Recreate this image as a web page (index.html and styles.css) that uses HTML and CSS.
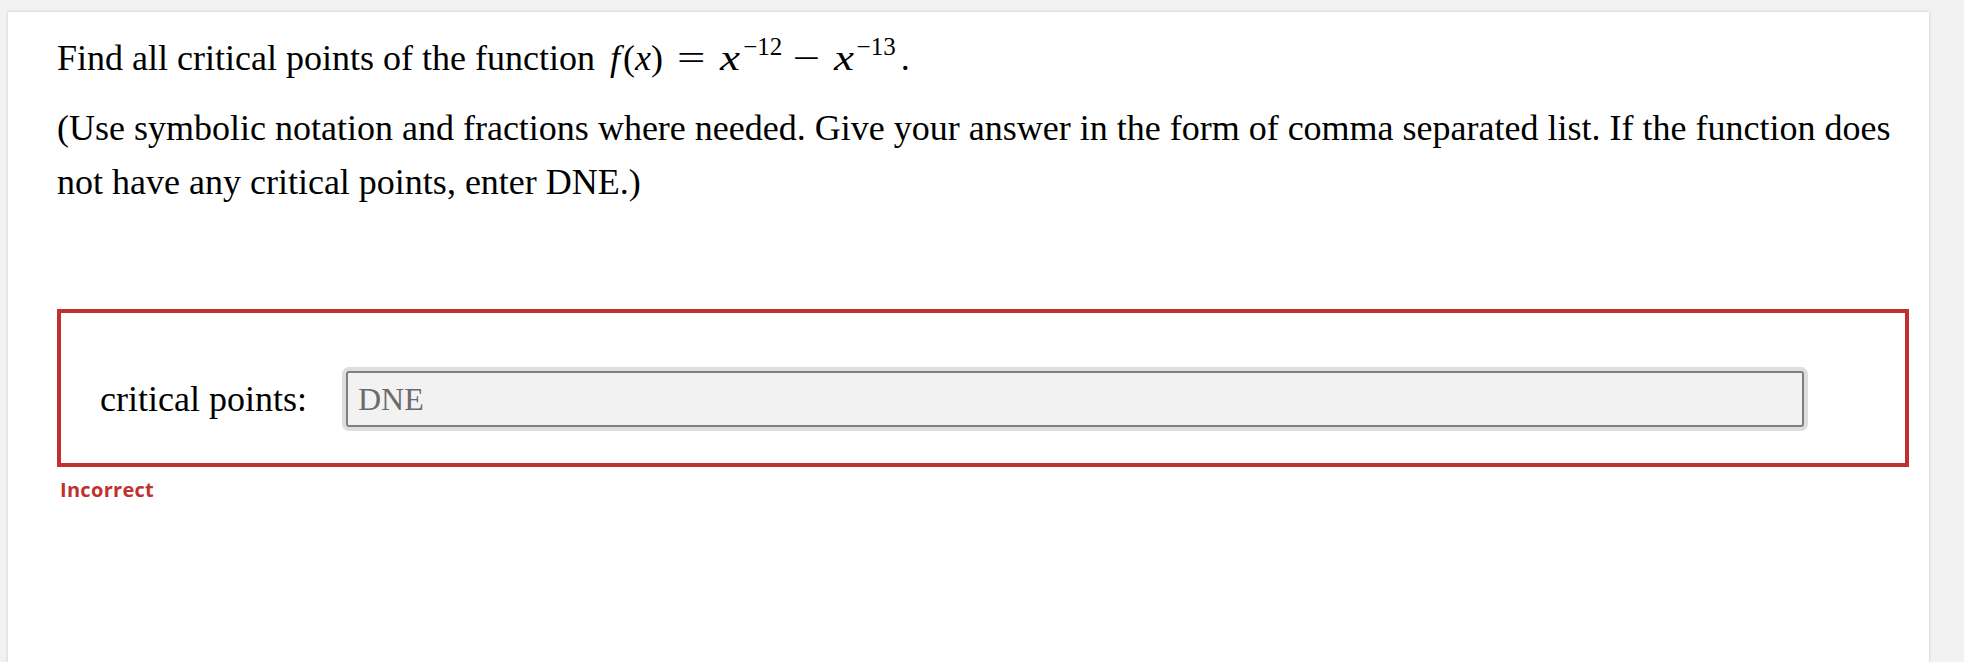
FILE: index.html
```html
<!DOCTYPE html>
<html lang="en">
<head>
<meta charset="utf-8">
<title>Critical points</title>
<link rel="stylesheet" href="styles.css">
</head>
<body>
<div class="card">
  <p class="q1">Find all critical points of the function <span class="math"><span class="mi f">f</span><span class="mo">(</span><span class="mi">x</span><span class="mo">)</span><span class="rel">=</span><span class="mi wide">x</span><span class="sup">−12</span><span class="bin">−</span><span class="mi wide">x</span><span class="sup">−13</span></span>.</p>
  <p class="q2">(Use symbolic notation and fractions where needed. Give your answer in the form of comma separated list. If the function does not have any critical points, enter DNE.)</p>
  <div class="answer">
    <div class="row">
      <label class="label" for="cp">critical points:</label>
      <input class="field" id="cp" type="text" value="DNE" readonly>
    </div>
  </div>
  <div class="status">Incorrect</div>
</div>
</body>
</html>
```

FILE: styles.css
```css
html, body {
  margin: 0;
  padding: 0;
  background: #f2f2f2;
}

.card {
  margin: 12px 35px 0 8px;
  min-height: 650px;
  background: #ffffff;
  box-shadow: 0 0 3px rgba(0, 0, 0, 0.18);
  padding: 19px 20px 0 49px;
  font-family: "Liberation Serif", "Times New Roman", serif;
  color: #000;
}

.q1, .q2 {
  margin: 0;
  font-size: 36px;
  line-height: 54px;
}

.q1 {
  margin-bottom: 16px;
}

.math {
  margin-right: 5px;
}

.mi {
  font-style: italic;
}

.mi.wide {
  display: inline-block;
  transform: scaleX(1.25);
  transform-origin: left center;
  margin-right: 4px;
}

.f {
  margin-left: 6px;
  margin-right: 3px;
}

.rel {
  display: inline-block;
  transform: scaleX(1.4);
  margin: 0 19px 0 18px;
}

.sup {
  font-size: 25px;
  line-height: 1;
  vertical-align: 15px;
  margin-left: 3px;
}

.bin {
  display: inline-block;
  transform: scaleX(1.35);
  margin: 0 17px 0 14px;
}

.answer {
  margin-top: 100px;
  border: 4px solid #c12f2f;
  padding: 58px 0 36px 39px;
}

.row {
  display: flex;
  align-items: center;
}

.label {
  font-size: 36px;
  line-height: 54px;
}

.field {
  margin: 0 0 0 39px;
  width: 1458px;
  height: 56px;
  box-sizing: border-box;
  border: 2px solid #7f7f7f;
  border-radius: 3px;
  box-shadow: 0 0 0 4px #dedede;
  background: #f2f2f2;
  padding: 0 10px;
  font-family: "Liberation Serif", "Times New Roman", serif;
  font-size: 32px;
  color: #6b6b6b;
  outline: none;
}

.status {
  margin: 9px 0 0 3px;
  font-family: "Open Sans", "Liberation Sans", sans-serif;
  font-weight: 700;
  font-size: 20px;
  letter-spacing: 0.3px;
  color: #c0302f;
}
```
